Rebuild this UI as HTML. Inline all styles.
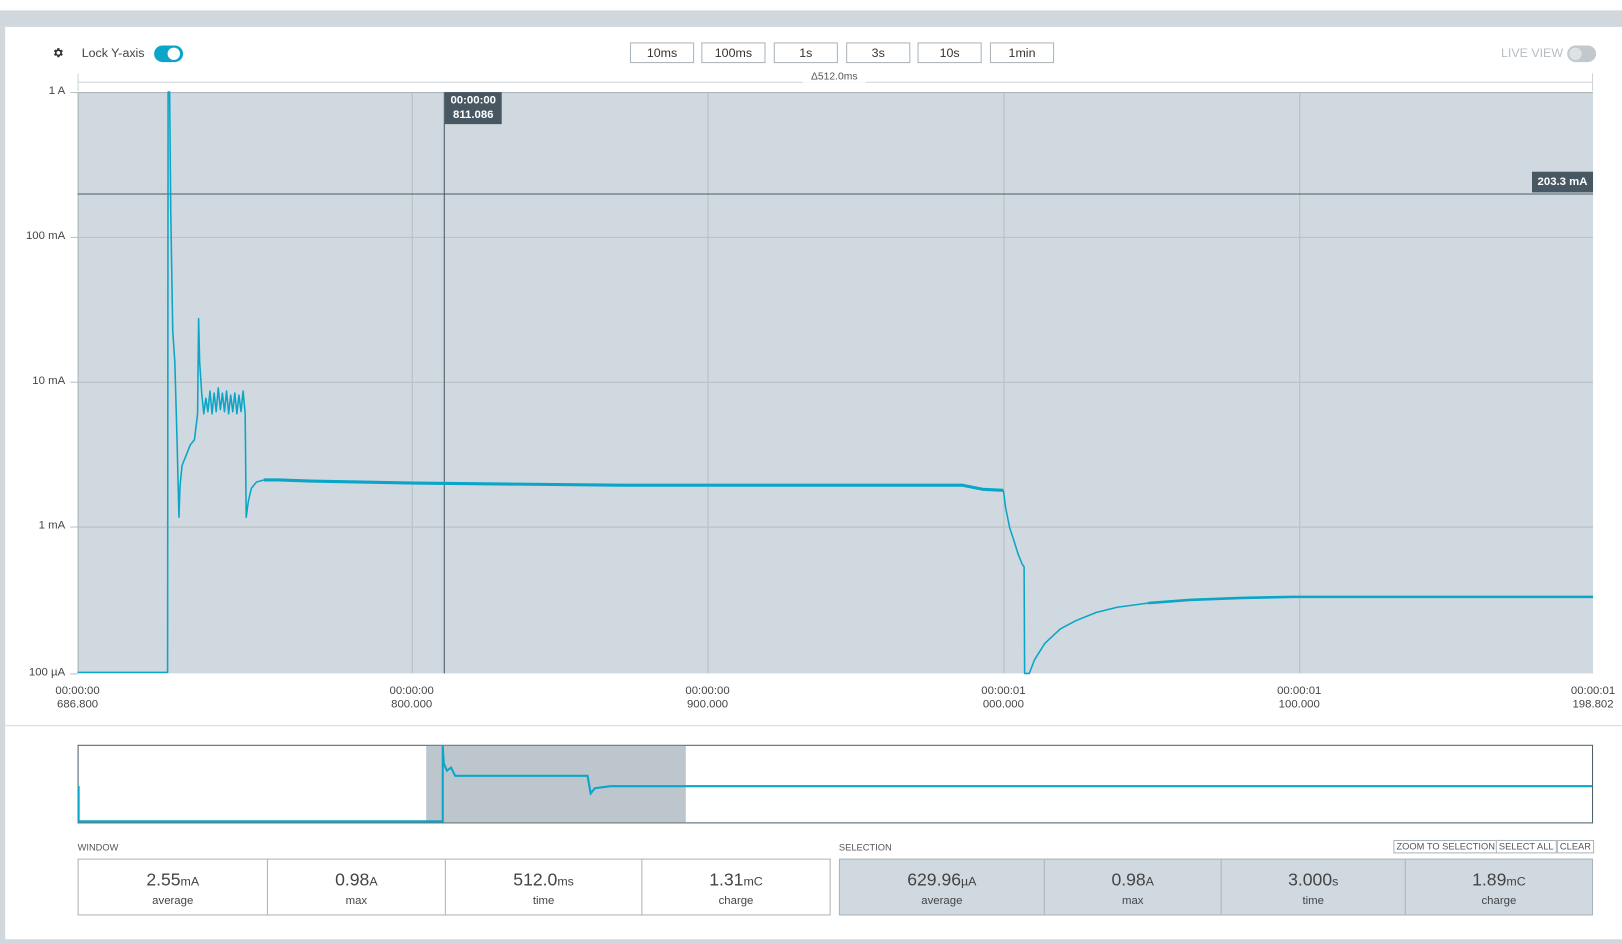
<!DOCTYPE html>
<html><head><meta charset="utf-8"><style>
*{margin:0;padding:0;box-sizing:border-box}
html,body{width:1622px;height:944px;overflow:hidden;background:#fff}
#w{position:absolute;left:0;top:0;width:1568px;height:913px;transform:scale(1.034439);transform-origin:0 0;font-family:"Liberation Sans",sans-serif;color:#333}
.a{position:absolute}
.btn{position:absolute;top:41px;width:62px;height:20px;border:1px solid #aab4ba;font-size:12px;text-align:center;line-height:18px;color:#333}
.yl{position:absolute;right:1505px;font-size:11px;color:#444;white-space:nowrap}
.xl{position:absolute;top:662px;font-size:11px;color:#444;text-align:center;line-height:13px;width:80px}
.cell{position:absolute;top:0;height:100%;text-align:center}
.v{font-size:17px;color:#444;margin-top:10px}
.v small{font-size:12px}
.l{font-size:11px;color:#444;margin-top:4px}
.sb{position:absolute;top:812px;height:13px;border:1px solid #aab4ba;font-size:9px;line-height:11px;padding:0 2px;color:#555;background:#fff}
</style></head><body><div id="w">
<div class="a" style="left:0;top:10px;width:1568px;height:16px;background:#d0d8de"></div>
<div class="a" style="left:0;top:26px;width:5px;height:887px;background:#d0d8de"></div>
<div class="a" style="left:0;top:908px;width:1568px;height:5px;background:#d0d8de"></div>
<div class="a" style="left:5px;top:701px;width:1563px;height:1px;background:#d0d8de"></div>

<svg class="a" style="left:50px;top:45px" width="12" height="12" viewBox="0 0 24 24"><path fill="#333" d="M19.4 13a7.5 7.5 0 000-2l2.1-1.6-2-3.5-2.5 1a7.3 7.3 0 00-1.7-1L14.9 3h-4l-.4 2.6a7.3 7.3 0 00-1.7 1l-2.5-1-2 3.5L6.4 11a7.5 7.5 0 000 2l-2.1 1.6 2 3.5 2.5-1a7.3 7.3 0 001.7 1l.4 2.6h4l.4-2.6a7.3 7.3 0 001.7-1l2.5 1 2-3.5zM12.9 15.5a3.5 3.5 0 110-7 3.5 3.5 0 010 7z"/></svg>
<div class="a" style="left:79px;top:44px;font-size:12px;color:#444">Lock Y-axis</div>
<div class="a" style="left:149px;top:44px;width:28px;height:16px;border-radius:8px;background:#0aa5c8"></div>
<div class="a" style="left:162px;top:46px;width:12px;height:12px;border-radius:6px;background:#fff"></div>

<div class="btn" style="left:609px">10ms</div>
<div class="btn" style="left:678px">100ms</div>
<div class="btn" style="left:748px">1s</div>
<div class="btn" style="left:818px">3s</div>
<div class="btn" style="left:887px">10s</div>
<div class="btn" style="left:957px">1min</div>

<div class="a" style="left:1451px;top:44px;font-size:12px;color:#b5bec4">LIVE VIEW</div>
<div class="a" style="left:1515px;top:44px;width:28px;height:16px;border-radius:8px;background:#c2c9cd"></div>
<div class="a" style="left:1517px;top:46px;width:12px;height:12px;border-radius:6px;background:#dde2e5"></div>

<div class="a" style="left:75px;top:79px;width:1465px;height:1px;background:#cdd5da"></div>
<div class="a" style="left:75px;top:71px;width:1px;height:17px;background:#cdd5da"></div>
<div class="a" style="left:1539px;top:71px;width:1px;height:17px;background:#cdd5da"></div>
<div class="a" style="left:776px;top:69px;padding:0 8px;background:#fff;font-size:10px;color:#555">Δ512.0ms</div>

<svg class="a" style="left:0;top:0" width="1568" height="913">
<rect x="75" y="89" width="1465" height="562" fill="#d0d9df"/>
<g stroke="#b8c0c4" stroke-width="1">
<line x1="75" y1="229.5" x2="1540" y2="229.5"/><line x1="75" y1="369.5" x2="1540" y2="369.5"/><line x1="75" y1="509.5" x2="1540" y2="509.5"/>
<line x1="398.5" y1="89" x2="398.5" y2="651"/><line x1="684.5" y1="89" x2="684.5" y2="651"/><line x1="970.5" y1="89" x2="970.5" y2="651"/><line x1="1256.5" y1="89" x2="1256.5" y2="651"/>
<line x1="68" y1="89.5" x2="75" y2="89.5"/><line x1="68" y1="229.5" x2="75" y2="229.5"/><line x1="68" y1="369.5" x2="75" y2="369.5"/><line x1="68" y1="509.5" x2="75" y2="509.5"/><line x1="68" y1="651.5" x2="75" y2="651.5"/>
</g>
<line x1="75.5" y1="89" x2="75.5" y2="651" stroke="#a9b2b7"/>
<line x1="75" y1="89.5" x2="1540" y2="89.5" stroke="#a9b2b7"/>
<line x1="75" y1="187.5" x2="1540" y2="187.5" stroke="#4a5a64"/>
<line x1="429.5" y1="89" x2="429.5" y2="651" stroke="#4a5a64"/>
<polyline fill="none" stroke="#0aa5c8" stroke-width="1.5" stroke-linejoin="round" points="75,650 162,650 162.5,89 163.5,89 164,89 165,200 167,320 169,350 171,420 173,500 174,470 176,450 180,440 184,430 188,425 191,400 192,308 193,350 195,380 197,400 199,385 201,398 203,378 205,400 207,380 209,398 211,375 213,396 215,380 217,398 219,378 221,400 223,382 225,398 227,380 229,400 231,382 233,398 235,378 237,400 238,500 240,485 243,472 248,466 255,464"/>
<polyline fill="none" stroke="#0aa5c8" stroke-width="3" stroke-linejoin="round" points="255,464 270,464 300,465 400,467 500,468 600,469 700,469 800,469 900,469 930,469 940,471 950,473 970,474"/>
<polyline fill="none" stroke="#0aa5c8" stroke-width="1.5" stroke-linejoin="round" points="970,474 972,490 976,510 980,522 984,535 988,545 990,548 990.5,651 995,651 1000,638 1010,622 1025,608 1040,600 1060,592 1080,587 1110,583"/>
<polyline fill="none" stroke="#0aa5c8" stroke-width="2.5" stroke-linejoin="round" points="1110,583 1150,580 1200,578 1250,577 1300,577 1540,577"/>

<rect x="75.5" y="720.5" width="1464" height="75" fill="#fff" stroke="#4f626c"/>
<rect x="412" y="721" width="251" height="74" fill="#bcc6cc"/>
<polyline fill="none" stroke="#0aa5c8" stroke-width="2" points="76,760 76,794 428,794 428,721 429,738 432,745 436,742 440,750 568,750 571,767 575,762 590,760 1539,760"/>
</svg>

<div class="yl" style="top:82px">1 A</div>
<div class="yl" style="top:222px">100 mA</div>
<div class="yl" style="top:362px">10 mA</div>
<div class="yl" style="top:502px">1 mA</div>
<div class="yl" style="top:644px">100 µA</div>

<div class="a" style="left:430px;top:89px;width:55px;height:31px;background:#475862;color:#fff;font-size:11px;font-weight:bold;text-align:center;line-height:14px;padding-top:1px">00:00:00<br>811.086</div>
<div class="a" style="left:1481px;top:166px;width:59px;height:20px;background:#475862;color:#fff;font-size:11px;font-weight:bold;text-align:center;line-height:20px">203.3 mA</div>

<div class="xl" style="left:35px">00:00:00<br>686.800</div>
<div class="xl" style="left:358px">00:00:00<br>800.000</div>
<div class="xl" style="left:644px">00:00:00<br>900.000</div>
<div class="xl" style="left:930px">00:00:01<br>000.000</div>
<div class="xl" style="left:1216px">00:00:01<br>100.000</div>
<div class="xl" style="left:1500px">00:00:01<br>198.802</div>

<div class="a" style="left:75px;top:814px;font-size:9px;color:#555">WINDOW</div>
<div class="a" style="left:811px;top:814px;font-size:9px;color:#555">SELECTION</div>
<div class="sb" style="left:1347px">ZOOM TO SELECTION</div>
<div class="sb" style="left:1446px">SELECT ALL</div>
<div class="sb" style="left:1505px">CLEAR</div>

<div class="a" style="left:75px;top:830px;width:728px;height:55px;border:1px solid #aab4ba">
<div class="cell" style="left:0;width:182px"><div class="v">2.55<small>mA</small></div><div class="l">average</div></div>
<div class="cell" style="left:182px;width:172px;border-left:1px solid #aab4ba"><div class="v">0.98<small>A</small></div><div class="l">max</div></div>
<div class="cell" style="left:354px;width:190px;border-left:1px solid #aab4ba"><div class="v">512.0<small>ms</small></div><div class="l">time</div></div>
<div class="cell" style="left:544px;width:182px;border-left:1px solid #aab4ba"><div class="v">1.31<small>mC</small></div><div class="l">charge</div></div>
</div>
<div class="a" style="left:811px;top:830px;width:729px;height:55px;border:1px solid #aab4ba;background:#d0d9df">
<div class="cell" style="left:0;width:197px"><div class="v">629.96<small>µA</small></div><div class="l">average</div></div>
<div class="cell" style="left:197px;width:171px;border-left:1px solid #aab4ba"><div class="v">0.98<small>A</small></div><div class="l">max</div></div>
<div class="cell" style="left:368px;width:178px;border-left:1px solid #aab4ba"><div class="v">3.000<small>s</small></div><div class="l">time</div></div>
<div class="cell" style="left:546px;width:181px;border-left:1px solid #aab4ba"><div class="v">1.89<small>mC</small></div><div class="l">charge</div></div>
</div>
</div></body></html>
